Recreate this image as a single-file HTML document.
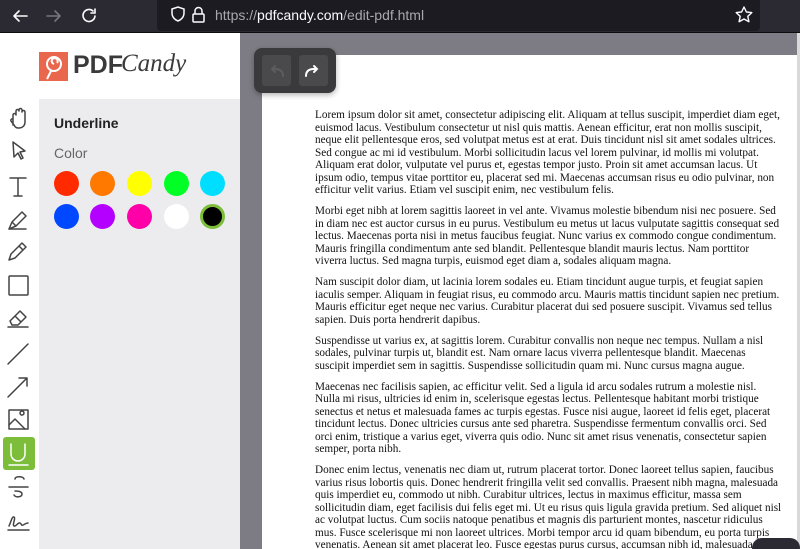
<!DOCTYPE html>
<html><head><meta charset="utf-8"><style>
*{margin:0;padding:0;box-sizing:border-box}
html,body{width:800px;height:549px;overflow:hidden}
body{position:relative;background:#7d7c84;font-family:"Liberation Sans",sans-serif}
.top{position:absolute;left:0;top:0;width:800px;height:33px;background:#2b2a33;border-bottom:1px solid #0c0c0d}
.url{position:absolute;left:157px;top:0;width:603px;height:31px;background:#1c1b22;border-radius:0 0 4px 4px}
.url span{position:absolute;left:58px;top:7px;font-size:14px;color:#a8a8ad}
.url b{font-weight:normal;color:#fbfbfe}
.logo{position:absolute;left:0;top:33px;width:240px;height:66px;background:#fff}
.tools{position:absolute;left:0;top:99px;width:39px;height:450px;background:#fff}
.panel{position:absolute;left:39px;top:99px;width:201px;height:450px;background:#ececee}
.paper{position:absolute;left:262px;top:55px;width:535px;height:494px;background:#fff}
.sb{position:absolute;left:797px;top:33px;width:3px;height:516px;background:#d9d9d9}
.txt{position:absolute;left:315px;top:108px;font-family:"Liberation Serif",serif;font-size:12px;line-height:12.5px;color:#111;white-space:nowrap;transform:scaleX(.935);transform-origin:0 0}
.txt p{margin-bottom:8.5px}
.dot{position:absolute;width:25px;height:25px;border-radius:50%}
.undo{position:absolute;left:254px;top:48px;width:82px;height:45px;background:#3a3a3c;border-radius:8px;box-shadow:0 2px 6px rgba(0,0,0,.3)}
.ub{position:absolute;top:7px;width:29px;height:31px;background:#4a4a4c;border-radius:3px}
</style></head><body>
<div class="top">
<svg width="160" height="32" style="position:absolute;left:0;top:0">
<g fill="none" stroke="#fbfbfe" stroke-width="1.6" stroke-linecap="round">
<path d="M14 16h13M14 16l5-5M14 16l5 5"/>
<path d="M47 16h13M60 16l-5-5M60 16l-5 5" stroke="#77767c"/>
<path d="M93 11a6 6 0 1 0 2 5"/><path d="M95 9v4h-4"/>
</g></svg>
<div class="url">
<svg width="50" height="31" style="position:absolute;left:8px;top:0"><g fill="none" stroke="#fbfbfe" stroke-width="1.5"><path d="M7 9l6-2 6 2v4c0 4-3 7-6 8-3-1-6-4-6-8z"/><rect x="28" y="14" width="11" height="8" rx="1"/><path d="M30 14v-3a3.5 3.5 0 0 1 7 0v3"/></g></svg>
<span>https://<b>pdfcandy.com</b>/edit-pdf.html</span>
<svg width="20" height="20" style="position:absolute;left:577px;top:5px"><path d="M10 2l2.4 5 5.4.6-4 3.7 1.1 5.4L10 14l-4.9 2.7 1.1-5.4-4-3.7 5.4-.6z" fill="none" stroke="#fbfbfe" stroke-width="1.4" stroke-linejoin="round"/></svg>
</div></div>
<div class="logo">
<div style="position:absolute;left:39px;top:19px;width:29px;height:29px;background:#e8674d"></div>
<svg width="29" height="29" style="position:absolute;left:39px;top:19px"><g fill="none" stroke="#fff" stroke-width="2"><circle cx="15" cy="12" r="7"/><path d="M15 12a3 3 0 1 1 3-1"/><path d="M12 19l-4 8"/></g></svg>
<div style="position:absolute;left:73px;top:18px;font-size:25px;font-weight:bold;color:#3a3a3a">PDF</div>
<div style="position:absolute;left:121px;top:17px;font-size:25px;font-style:italic;font-family:'Liberation Serif',serif;color:#3a3a3a">Candy</div>
</div>
<div class="tools">
<div style="position:absolute;left:3px;top:338px;width:32px;height:33px;background:#7cbd3a;border-radius:3px"></div>
<svg width="39" height="450" style="position:absolute;left:0;top:0"><g fill="none" stroke="#444" stroke-width="1.5" stroke-linejoin="round" stroke-linecap="round">
<path d="M13 26v-10a1.5 1.5 0 0 1 3 0v-4a1.5 1.5 0 0 1 3 0v-1a1.5 1.5 0 0 1 3 0v2a1.5 1.5 0 0 1 3 0v10c0 4-3 6-6 6h-1c-2 0-3-1-4-3l-3-4a1.5 1.5 0 0 1 2-2z"/>
<path d="M13 43l12 9-5 1 3 6-2 1-3-6-4 4z"/>
<path d="M10 79h16M18 79v18M14 97h8"/>
<path d="M9 130l3-7 10-10 4 4-10 10-7 3zM12 123l4 4"/><path d="M9 130h17"/>
<path d="M9 161l2-6 11-11 4 4-11 11zM19 147l4 4"/>
<rect x="9" y="177" width="19" height="19" rx="1"/>
<path d="M10 222l10-10 6 6-8 8h-6zM15 217l6 6M8 228h20"/>
<path d="M8 265l20-20"/>
<path d="M8 298l19-19M19 279h8v8"/>
<rect x="9" y="311" width="19" height="19"/><path d="M9 326l6-6 10 10M20 314a2 2 0 1 1 0 .1"/>
<path d="M11 345v10a7 7 0 0 0 14 0v-10M9 366h19" stroke="#fff"/>
<path d="M9 388h19M24 380c-1-3-9-3-9 0M15 392c1 0 7 0 7 3s-6 4-8 1"/>
<path d="M8 431h21M9 427c2-4 3-10 5-9s-2 8 0 9 4-4 6-3 1 3 3 2 3-2 5-2"/>
</g></svg>
</div>
<div class="panel">
<div style="position:absolute;left:15px;top:16px;font-size:14px;font-weight:bold;color:#222">Underline</div>
<div style="position:absolute;left:15px;top:46px;font-size:14px;color:#666">Color</div>
<div class="dot" style="left:15px;top:72px;background:#ff2a00"></div>
<div class="dot" style="left:51px;top:72px;background:#ff7800"></div>
<div class="dot" style="left:88px;top:72px;background:#ffff00"></div>
<div class="dot" style="left:125px;top:72px;background:#00ff24"></div>
<div class="dot" style="left:161px;top:72px;background:#00deff"></div>
<div class="dot" style="left:15px;top:105px;background:#0048ff"></div>
<div class="dot" style="left:51px;top:105px;background:#b400ff"></div>
<div class="dot" style="left:88px;top:105px;background:#ff00a8"></div>
<div class="dot" style="left:125px;top:105px;background:#fff"></div>
<div class="dot" style="left:161px;top:105px;background:#000;border:3px solid #7cbd3a"></div>
</div>
<div class="paper"></div>
<div class="sb"></div>
<div class="undo">
<div class="ub" style="left:8px"></div><div class="ub" style="left:45px"></div>
<svg width="82" height="45" style="position:absolute;left:0;top:0"><g fill="none" stroke-width="2" stroke-linecap="round"><path d="M29 28c0-5-3-7-8-7h-3M21 18l-3 3 3 3" stroke="#5d5d5f"/><path d="M52 28c0-5 3-7 8-7h3M60 18l3 3-3 3" stroke="#fff"/></g></svg>
</div>
<div class="txt">
<p>Lorem ipsum dolor sit amet, consectetur adipiscing elit. Aliquam at tellus suscipit, imperdiet diam eget,<br>euismod lacus. Vestibulum consectetur ut nisl quis mattis. Aenean efficitur, erat non mollis suscipit,<br>neque elit pellentesque eros, sed volutpat metus est at erat. Duis tincidunt nisl sit amet sodales ultrices.<br>Sed congue ac mi id vestibulum. Morbi sollicitudin lacus vel lorem pulvinar, id mollis mi volutpat.<br>Aliquam erat dolor, vulputate vel purus et, egestas tempor justo. Proin sit amet accumsan lacus. Ut<br>ipsum odio, tempus vitae porttitor eu, placerat sed mi. Maecenas accumsan risus eu odio pulvinar, non<br>efficitur velit varius. Etiam vel suscipit enim, nec vestibulum felis.</p>
<p>Morbi eget nibh at lorem sagittis laoreet in vel ante. Vivamus molestie bibendum nisi nec posuere. Sed<br>in diam nec est auctor cursus in eu purus. Vestibulum eu metus ut lacus vulputate sagittis consequat sed<br>lectus. Maecenas porta nisi in metus faucibus feugiat. Nunc varius ex commodo congue condimentum.<br>Mauris fringilla condimentum ante sed blandit. Pellentesque blandit mauris lectus. Nam porttitor<br>viverra luctus. Sed magna turpis, euismod eget diam a, sodales aliquam magna.</p>
<p>Nam suscipit dolor diam, ut lacinia lorem sodales eu. Etiam tincidunt augue turpis, et feugiat sapien<br>iaculis semper. Aliquam in feugiat risus, eu commodo arcu. Mauris mattis tincidunt sapien nec pretium.<br>Mauris efficitur eget neque nec varius. Curabitur placerat dui sed posuere suscipit. Vivamus sed tellus<br>sapien. Duis porta hendrerit dapibus.</p>
<p>Suspendisse ut varius ex, at sagittis lorem. Curabitur convallis non neque nec tempus. Nullam a nisl<br>sodales, pulvinar turpis ut, blandit est. Nam ornare lacus viverra pellentesque blandit. Maecenas<br>suscipit imperdiet sem in sagittis. Suspendisse sollicitudin quam mi. Nunc cursus magna augue.</p>
<p>Maecenas nec facilisis sapien, ac efficitur velit. Sed a ligula id arcu sodales rutrum a molestie nisl.<br>Nulla mi risus, ultricies id enim in, scelerisque egestas lectus. Pellentesque habitant morbi tristique<br>senectus et netus et malesuada fames ac turpis egestas. Fusce nisi augue, laoreet id felis eget, placerat<br>tincidunt lectus. Donec ultricies cursus ante sed pharetra. Suspendisse fermentum convallis orci. Sed<br>orci enim, tristique a varius eget, viverra quis odio. Nunc sit amet risus venenatis, consectetur sapien<br>semper, porta nibh.</p>
<p>Donec enim lectus, venenatis nec diam ut, rutrum placerat tortor. Donec laoreet tellus sapien, faucibus<br>varius risus lobortis quis. Donec hendrerit fringilla velit sed convallis. Praesent nibh magna, malesuada<br>quis imperdiet eu, commodo ut nibh. Curabitur ultrices, lectus in maximus efficitur, massa sem<br>sollicitudin diam, eget facilisis dui felis eget mi. Ut eu risus quis ligula gravida pretium. Sed aliquet nisl<br>ac volutpat luctus. Cum sociis natoque penatibus et magnis dis parturient montes, nascetur ridiculus<br>mus. Fusce scelerisque mi non laoreet ultrices. Morbi tempor arcu id quam bibendum, eu porta turpis<br>venenatis. Aenean sit amet placerat leo. Fusce egestas purus cursus, accumsan nibh id, malesuada nisi.</p>
</div>
<div style="position:absolute;left:752px;top:538px;width:48px;height:20px;background:#2b2a33;border-radius:10px"></div>
</body></html>
